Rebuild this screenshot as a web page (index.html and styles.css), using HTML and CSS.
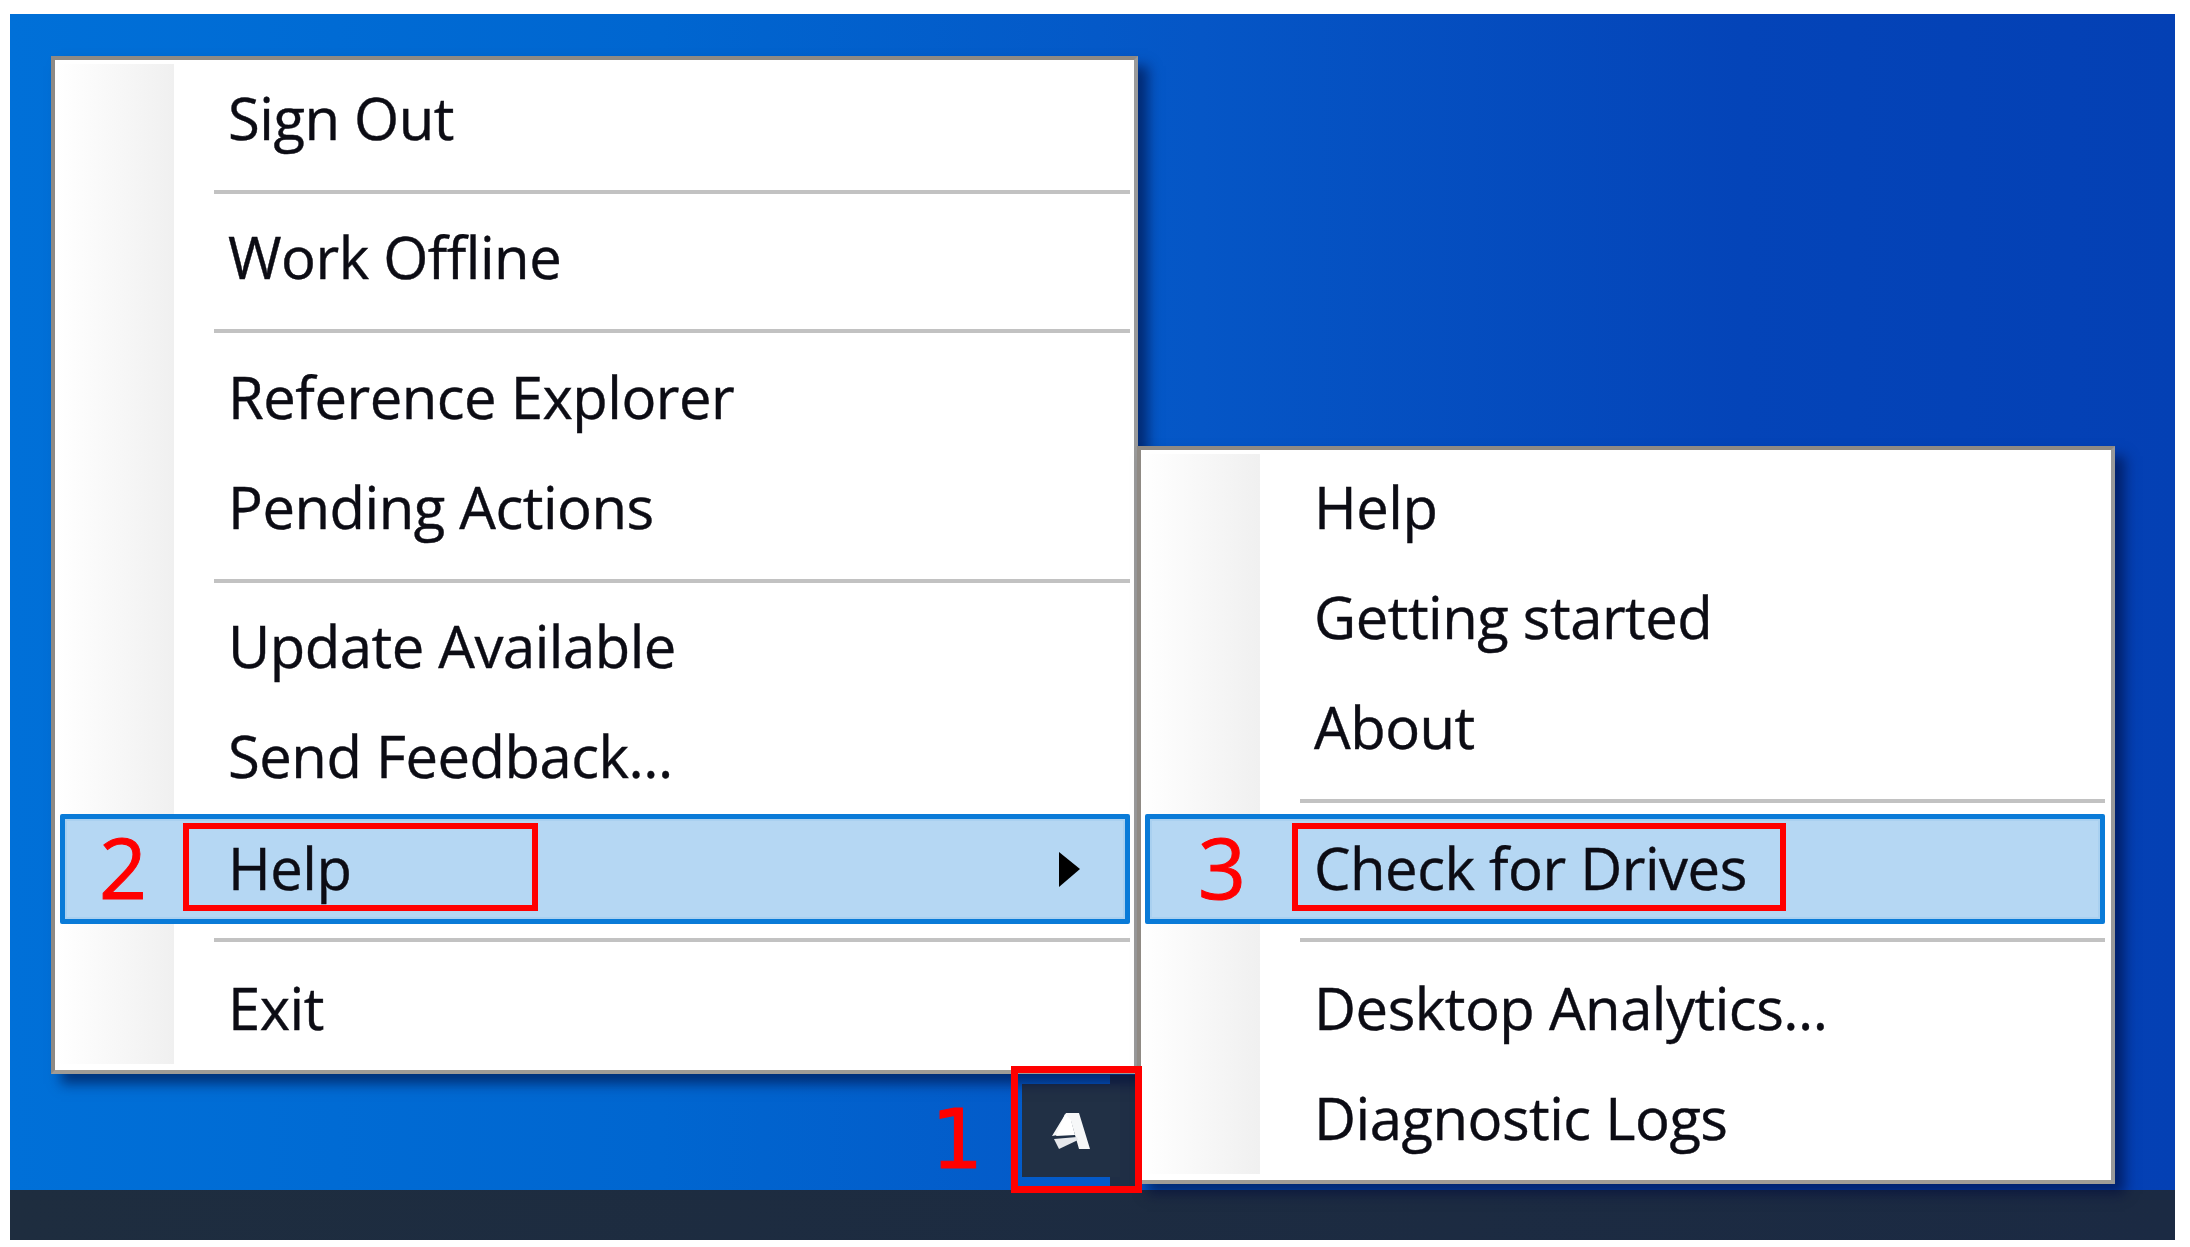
FILE: index.html
```html
<!DOCTYPE html>
<html lang="en">
<head>
<meta charset="utf-8">
<title>Desktop Connector menu</title>
<link rel="stylesheet" href="styles.css">
</head>
<body>
<main class="desktop">
  <div class="wallpaper"></div>
  <div class="taskbar"></div>

  <div class="tray-shade"></div>
  <div class="tray-icon">
    <svg class="logo" viewBox="0 0 40 38" aria-hidden="true">
      <path d="M15 1 L28 1 L39 37 L28 37 L20 9 L12 22 L1 24 Z" fill="#f6f7f8"/>
      <path d="M14 2 L20 8 L24 23 L5 24 Z" fill="#ffffff"/>
      <path d="M3 27 L26 25 L27 28 L8 37 Z" fill="#e6e8ec"/>
    </svg>
  </div>

  <nav class="menu menu-main">
    <div class="row">Sign Out</div>
    <div class="sep"></div>
    <div class="row">Work Offline</div>
    <div class="sep sep-mid"></div>
    <div class="row">Reference Explorer</div>
    <div class="row">Pending Actions</div>
    <div class="sep"></div>
    <div class="row">Update Available</div>
    <div class="row">Send Feedback...</div>
    <div class="row active">Help<svg class="arrow" viewBox="0 0 23 37" aria-hidden="true"><path d="M1 1 L22 18 L1 36 Z"/></svg></div>
    <div class="sep sep-wide"></div>
    <div class="row">Exit</div>
  </nav>

  <nav class="menu menu-sub">
    <div class="row">Help</div>
    <div class="row">Getting started</div>
    <div class="row">About</div>
    <div class="sep"></div>
    <div class="row active">Check for Drives</div>
    <div class="sep sep-wide"></div>
    <div class="row">Desktop Analytics...</div>
    <div class="row">Diagnostic Logs</div>
  </nav>

  <div class="callout box-1"></div>
  <div class="callout box-2"></div>
  <div class="callout box-3"></div>
  <span class="num num-1">1</span>
  <span class="num num-2">2</span>
  <span class="num num-3">3</span>
</main>
</body>
</html>
```
FILE: styles.css
```css
html, body {
  margin: 0;
  padding: 0;
  background: #ffffff;
}
body {
  width: 2190px;
  height: 1247px;
  overflow: hidden;
  padding: 14px 15px 7px 10px;
  box-sizing: border-box;
}
.desktop {
  position: relative;
  display: flex;
  flex-direction: column;
  width: 2165px;
  height: 1226px;
  overflow: hidden;
  font-family: "Open Sans", "Noto Sans", sans-serif;
}
.wallpaper {
  flex: 1;
  background: linear-gradient(90deg, #0070d8 0%, #0066d0 30%, #0556c6 55%, #0444b8 80%, #0440b4 100%);
}
.taskbar {
  height: 50px;
  background: linear-gradient(90deg, #1e2d3f 0%, #1b2a43 100%);
}
.tray-shade {
  position: absolute;
  left: 1100px;
  top: 1061px;
  width: 30px;
  height: 116px;
  background: #1f2e45;
}
.tray-icon {
  position: absolute;
  left: 1012px;
  top: 1070px;
  width: 98px;
  height: 93px;
  background: #213045;
  display: flex;
  align-items: center;
  justify-content: center;
}
.logo {
  width: 40px;
  height: 38px;
  filter: blur(0.5px);
}
.menu {
  position: absolute;
  box-sizing: border-box;
  display: flex;
  flex-direction: column;
  background: #ffffff;
  border: 4px solid #8f8a84;
  border-right-color: #9a9a9a;
  border-bottom-color: #a09c96;
  box-shadow: 10px 10px 12px rgba(0, 12, 60, 0.6);
  padding-bottom: 4px;
  color: #0c0c14;
  font-size: 58px;
  letter-spacing: -0.5px;
}
.menu::before {
  content: "";
  position: absolute;
  top: 4px;
  bottom: 6px;
  background: linear-gradient(90deg, #ffffff 0%, #f0f0f0 100%);
}
.menu-main {
  left: 41px;
  top: 42px;
  width: 1087px;
  padding-top: 6px;
}
.menu-main::before {
  left: 3px;
  width: 116px;
}
.menu-sub {
  left: 1127px;
  top: 432px;
  width: 978px;
  padding-top: 5px;
}
.menu-sub::before {
  left: 2px;
  width: 117px;
}
.row {
  position: relative;
  box-sizing: border-box;
  display: flex;
  align-items: center;
  justify-content: space-between;
  height: 110px;
  border: 5px solid transparent;
  padding-bottom: 6px;
  line-height: 1;
  filter: blur(0.6px);
  -webkit-text-stroke: 0.4px #0c0c14;
}
.menu-main .row {
  margin: 0 4px 0 5px;
  padding-left: 163px;
  padding-right: 44px;
}
.menu-sub .row {
  margin: 0 6px 0 4px;
  padding-left: 164px;
  padding-right: 44px;
}
.row.active {
  background: #b5d7f3;
  border-color: #0a7bd8;
  box-shadow: inset 0 0 0 2px #a9d0f0;
  filter: none;
  border-radius: 2px;
  padding-bottom: 3px;
}
.arrow {
  width: 23px;
  height: 37px;
  fill: #000000;
  margin-top: 4px;
}
.sep {
  position: relative;
  box-sizing: border-box;
  height: 29px;
  padding-top: 14px;
}
.sep-mid {
  height: 30px;
}
.sep-wide {
  height: 32px;
}
.sep::after {
  content: "";
  display: block;
  height: 4px;
  background: #c2c2c2;
  filter: blur(0.5px);
}
.menu-main .sep {
  margin: 0 4px 0 159px;
}
.menu-sub .sep {
  margin: 0 6px 0 159px;
}
.callout {
  position: absolute;
  box-sizing: border-box;
  border: 6px solid #ff0000;
}
.box-1 {
  left: 1001px;
  top: 1052px;
  width: 131px;
  height: 127px;
  border-width: 7px;
}
.box-2 {
  left: 173px;
  top: 809px;
  width: 355px;
  height: 88px;
}
.box-3 {
  left: 1282px;
  top: 809px;
  width: 494px;
  height: 88px;
}
.num {
  position: absolute;
  color: #ff0000;
  font-size: 84px;
  line-height: 84px;
  font-family: "Open Sans", sans-serif;
  -webkit-text-stroke: 1px #ff0000;
}
.num-1 {
  left: 921px;
  top: 1084px;
  font-family: "DejaVu Sans", sans-serif;
  font-size: 82px;
}
.num-2 {
  left: 89px;
  top: 811px;
}
.num-3 {
  left: 1188px;
  top: 811px;
}
```
